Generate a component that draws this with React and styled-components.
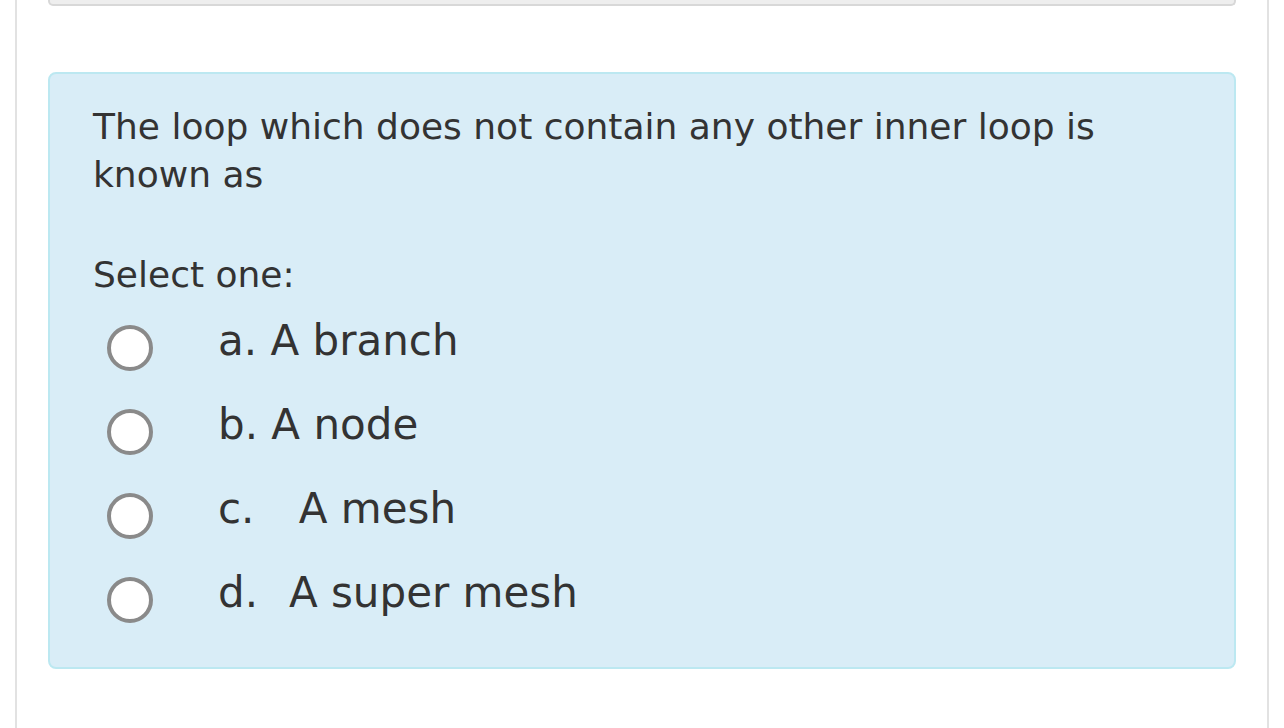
import React from 'react';
import styled, { createGlobalStyle } from 'styled-components';

const GlobalStyle = createGlobalStyle`
  html, body {
    margin: 0;
    padding: 0;
    background: #ffffff;
  }
  body {
    font-family: "DejaVu Sans", Verdana, sans-serif;
    color: #333333;
  }
`;

const Page = styled.div`
  margin-left: 15px;
  width: 1254px;
  min-height: 728px;
  box-sizing: border-box;
  border-left: 2px solid #e2e2e2;
  border-right: 2px solid #e2e2e2;
  padding: 0 31px;
`;

const PrevBlock = styled.div`
  height: 4px;
  background: #eeeeee;
  border: 2px solid #d8d8d8;
  border-top: none;
  border-radius: 0 0 5px 5px;
`;

const QuestionBox = styled.div`
  margin-top: 66px;
  background: #d9edf7;
  border: 2px solid #bce8f1;
  border-radius: 8px;
  padding: 29px 43px 32px;
`;

const QuestionText = styled.div`
  font-size: 36px;
  line-height: 48px;
  color: #333333;
  margin: 0;
`;

const Prompt = styled.div`
  font-size: 36px;
  line-height: 48px;
  margin-top: 52px;
`;

const Options = styled.div`
  display: flex;
  flex-direction: column;
`;

const OptionRow = styled.label`
  display: flex;
  align-items: center;
  height: 84px;
`;

const Radio = styled.span`
  flex: none;
  width: 38px;
  height: 38px;
  border-radius: 50%;
  border: 4px solid #8a8a8a;
  background: #ffffff;
  margin: 13px 65px 0 14px;
`;

const OptionText = styled.span`
  font-size: 42px;
  line-height: 52px;
  white-space: pre;
`;

const options = [
  'a. A branch',
  'b. A node',
  'c.   \u200AA mesh',
  'd.  \u200AA super mesh',
];

export default function App() {
  return (
    <>
      <GlobalStyle />
      <Page>
        <PrevBlock />
        <QuestionBox>
          <QuestionText>
            The loop which does not contain any other inner loop is known as
          </QuestionText>
          <Prompt>Select one:</Prompt>
          <Options>
            {options.map((o) => (
              <OptionRow key={o}>
                <Radio />
                <OptionText>{o}</OptionText>
              </OptionRow>
            ))}
          </Options>
        </QuestionBox>
      </Page>
    </>
  );
}
